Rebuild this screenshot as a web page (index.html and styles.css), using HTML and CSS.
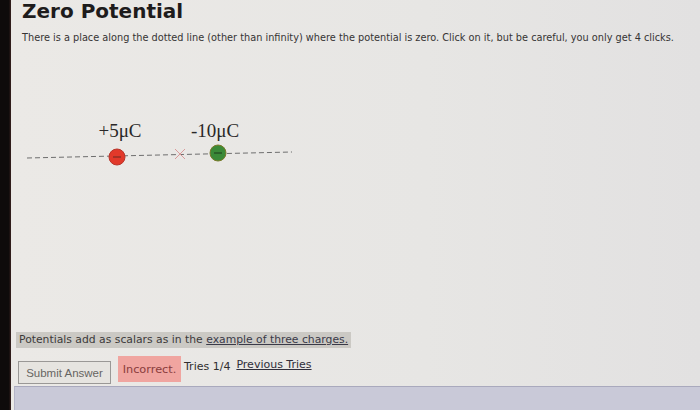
FILE: index.html
```html
<!DOCTYPE html>
<html>
<head>
<meta charset="utf-8">
<link rel="stylesheet" href="styles.css">
</head>
<body>
<div class="screen">
  <div class="bezel"></div>
  <main class="page">
    <h1 class="title">Zero Potential</h1>
    <p class="intro">There is a place along the dotted line (other than infinity) where the potential is zero. Click on it, but be careful, you only get 4 clicks.</p>
    <div class="diagram">
      <svg width="300" height="60" viewBox="0 0 300 60">
        <text class="charge-label" x="98" y="27" text-anchor="middle">+5μC</text>
        <text class="charge-label" x="193" y="27" text-anchor="middle">-10μC</text>
        <line x1="5" y1="48" x2="270" y2="42" stroke="#6e6e6e" stroke-width="1" stroke-dasharray="5 3"/>
        <circle cx="95" cy="47" r="8" fill="#e2392a" stroke="#b8352a" stroke-width="1"/>
        <line x1="91" y1="47" x2="99" y2="47" stroke="#6a2a20" stroke-width="1"/>
        <circle cx="196" cy="43" r="8" fill="#3b8a38" stroke="#7a7a2a" stroke-width="1"/>
        <line x1="192" y1="43" x2="200" y2="43" stroke="#1f3a1a" stroke-width="1"/>
        <path d="M153 39 L163 49 M163 39 L153 49" stroke="#d99a9a" stroke-width="1" fill="none"/>
      </svg>
    </div>
    <div class="note"><span class="note-text">Potentials add as scalars as in the <a class="link" href="#">example of three charges.</a></span></div>
    <div class="actions">
      <button class="submit">Submit Answer</button>
      <span class="incorrect">Incorrect.</span>
      <span class="tries">Tries 1/4</span>
      <a class="link tries-link" href="#">Previous Tries</a>
    </div>
    <div class="next-panel"></div>
  </main>
</div>
</body>
</html>
```

FILE: styles.css
```css
html, body {
  margin: 0;
  padding: 0;
  width: 700px;
  height: 410px;
  overflow: hidden;
}
body {
  background: #e8e6e3;
  font-family: "DejaVu Sans", Verdana, sans-serif;
}
.screen {
  display: flex;
  height: 410px;
}
.bezel {
  width: 11px;
  flex: none;
  background: linear-gradient(to right, #0e0b0b 80%, #3a2220);
}
.page {
  flex: 1;
  padding-left: 11px;
  display: flex;
  flex-direction: column;
  background: linear-gradient(to right, #ebe9e6, #e7e6e4 60%, #e2e1e1);
  overflow: hidden;
}
.title {
  margin: 0;
  font-size: 20px;
  line-height: 22px;
  font-weight: bold;
  color: #1e1c1c;
}
.intro {
  margin: 9px 0 0 0;
  font-size: 9.75px;
  line-height: 14px;
  color: #363434;
  white-space: nowrap;
}
.diagram {
  margin-top: 65px;
  height: 60px;
}
.diagram svg {
  display: block;
}
.charge-label {
  font-family: "Liberation Serif", "Times New Roman", serif;
  font-size: 19px;
  fill: #2a2828;
}
.note {
  margin-top: 162px;
  margin-left: -6px;
  display: flex;
}
.note-text {
  background: #cbc9c4;
  padding: 1px 3px 2px;
  font-size: 10.8px;
  line-height: 13px;
  color: #3c3a3a;
}
.link {
  color: #3a3a48;
  text-decoration: underline;
}
.actions {
  margin-top: 8px;
  margin-left: -4px;
  display: flex;
  align-items: flex-start;
  height: 30px;
}
.submit {
  margin-top: 5px;
  width: 93px;
  height: 23px;
  padding: 0;
  background: #e6e4e0;
  border: 1px solid #9a9896;
  font-family: "Liberation Sans", Arial, sans-serif;
  font-size: 11.5px;
  color: #666462;
}
.incorrect {
  margin-left: 7px;
  width: 63px;
  height: 26px;
  background: #f0a5a0;
  display: flex;
  align-items: center;
  justify-content: center;
  font-size: 11.3px;
  color: #8a3c3c;
}
.tries {
  margin-left: 3px;
  margin-top: 4px;
  font-size: 11px;
  color: #302e2e;
}
.tries-link {
  margin-left: 6px;
  margin-top: 2px;
  font-size: 11px;
  color: #302e3a;
}
.next-panel {
  margin-left: -8px;
  flex: 1;
  background: #c9c9d8;
  border-top: 1px solid #a9a9bd;
  border-left: 1px solid #b5b5c8;
}
```
